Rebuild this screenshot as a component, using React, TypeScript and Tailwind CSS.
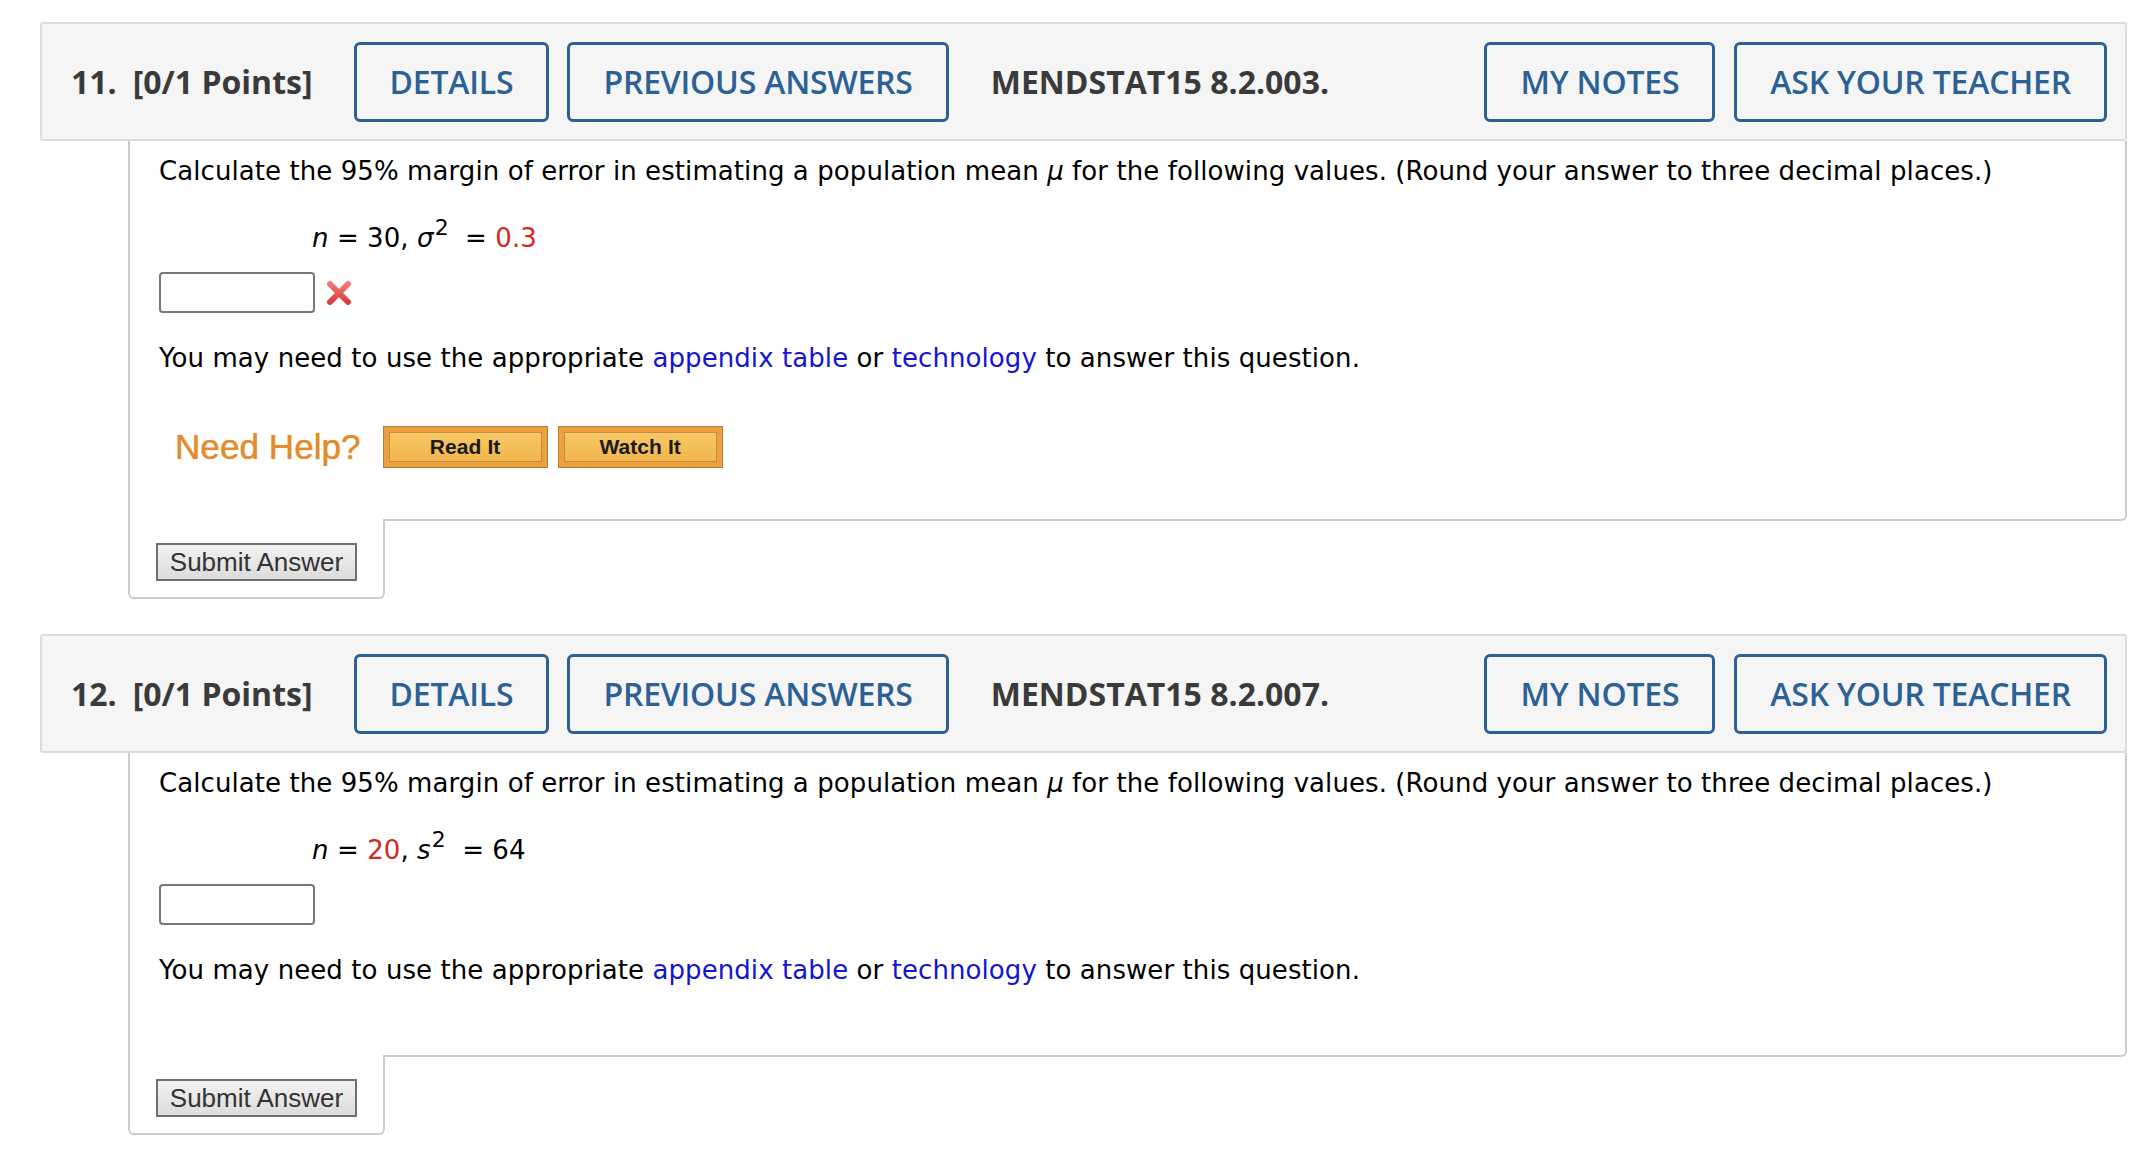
import React from "react";

const blue = "border-[#2c6195] text-[#2c6195]";

const HeadButton = ({ label }: { label: string }) => (
  <button
    className={`h-[80px] rounded-[6px] border-[3px] ${blue} bg-[#f5f5f5] px-[33px] text-[32px] font-semibold tracking-[-0.2px]`}
  >
    {label}
  </button>
);

const Header = ({ num, code }: { num: string; code: string }) => (
  <div className="flex h-[119px] items-center rounded-[3px] border-2 border-[#dcdcdc] bg-[#f5f5f5] pl-[29px] pr-[18px] font-['Open_Sans',sans-serif]">
    <span className="text-[32px] font-bold text-[#3a3a3a]">{num}</span>
    <span className="ml-[16px] text-[32px] font-bold text-[#3a3a3a]">[0/1 Points]</span>
    <div className="ml-[41px] flex gap-[18px]">
      <HeadButton label="DETAILS" />
      <HeadButton label="PREVIOUS ANSWERS" />
    </div>
    <span className="ml-[42px] text-[32px] font-bold text-[#3a3a3a]">{code}</span>
    <div className="ml-auto flex gap-[19px]">
      <HeadButton label="MY NOTES" />
      <HeadButton label="ASK YOUR TEACHER" />
    </div>
  </div>
);

const WrongMark = () => (
  <svg width="28" height="26" viewBox="0 0 28 26" className="ml-[10px]">
    <defs>
      <linearGradient id="xg" x1="0" y1="0" x2="0" y2="1">
        <stop offset="0" stopColor="#f07a7a" />
        <stop offset="1" stopColor="#d83c3c" />
      </linearGradient>
    </defs>
    <path d="M5 4 L23 22 M23 4 L5 22" stroke="url(#xg)" strokeWidth="6" strokeLinecap="round" />
  </svg>
);

const HelpButton = ({ label }: { label: string }) => (
  <div className="h-[42px] w-[165px] border border-[#b47c3a] bg-[#eda03e] p-[5px]">
    <div className="flex h-full items-center justify-center border border-[#c58c42] bg-gradient-to-b from-[#f7c865] to-[#f2b64c] font-['Liberation_Sans',sans-serif] text-[21px] font-bold text-[#1a1a1a]">
      {label}
    </div>
  </div>
);

const Sq = () => <sup className="-top-[12px] ml-[1px] mr-[8px] text-[22px]">2</sup>;

const Question = ({
  num,
  code,
  formula,
  wrong,
  help,
}: {
  num: string;
  code: string;
  formula: React.ReactNode;
  wrong?: boolean;
  help?: boolean;
}) => (
  <div>
    <Header num={num} code={code} />
    <div className="ml-[88px] rounded-br-[6px] border-b-2 border-l-2 border-r-2 border-[#cccccc] pl-[29px] pt-[12px] font-['DejaVu_Sans',Verdana,sans-serif] text-[26px] leading-[36px] tracking-[0.08px] text-black">
      <p>
        Calculate the 95% margin of error in estimating a population mean <i>μ</i> for the following
        values. (Round your answer to three decimal places.)
      </p>
      <p className="mt-[31px] pl-[153px]">{formula}</p>
      <div className="mt-[16px] flex items-center">
        <input className="h-[41px] w-[156px] rounded-[4px] border-2 border-[#777] bg-white" />
        {wrong && <WrongMark />}
      </div>
      <p className="mt-[27px]">
        You may need to use the appropriate <span className="text-[#1414d2]">appendix table</span> or{" "}
        <span className="text-[#1414d2]">technology</span> to answer this question.
      </p>
      {help ? (
        <div className="mt-[50px] flex items-center pb-[51px] pl-[16px]">
          <span className="font-['Liberation_Sans',sans-serif] text-[35px] leading-[42px] text-[#e48a2f] [text-shadow:0_0_1px_#e48a2f]">
            Need Help?
          </span>
          <div className="ml-[22px] flex gap-[10px]">
            <HelpButton label="Read It" />
            <HelpButton label="Watch It" />
          </div>
        </div>
      ) : (
        <div className="h-[67px]" />
      )}
    </div>
    <div className="relative -mt-[2px] ml-[88px] w-[257px] rounded-b-[6px] border-b-2 border-l-2 border-r-2 border-[#cccccc] bg-white pb-[16px] pl-[26px] pt-[24px]">
      <button className="h-[38px] w-[201px] border-2 border-[#707070] bg-gradient-to-b from-[#f2f2f2] to-[#dcdcdc] font-['Liberation_Sans',sans-serif] text-[26px] leading-none text-[#333]">
        Submit Answer
      </button>
    </div>
  </div>
);

export default function App() {
  return (
    <div className="min-h-screen bg-white pl-[40px] pr-[23px] pt-[22px]">
      <Question
        num="11."
        code="MENDSTAT15 8.2.003."
        wrong
        help
        formula={
          <>
            <i>n</i> = 30, <i>σ</i>
            <Sq /> = <span className="text-[#cf2a1c]">0.3</span>
          </>
        }
      />
      <div className="h-[35px]" />
      <Question
        num="12."
        code="MENDSTAT15 8.2.007."
        formula={
          <>
            <i>n</i> = <span className="text-[#cf2a1c]">20</span>, <i>s</i>
            <Sq /> = 64
          </>
        }
      />
    </div>
  );
}
